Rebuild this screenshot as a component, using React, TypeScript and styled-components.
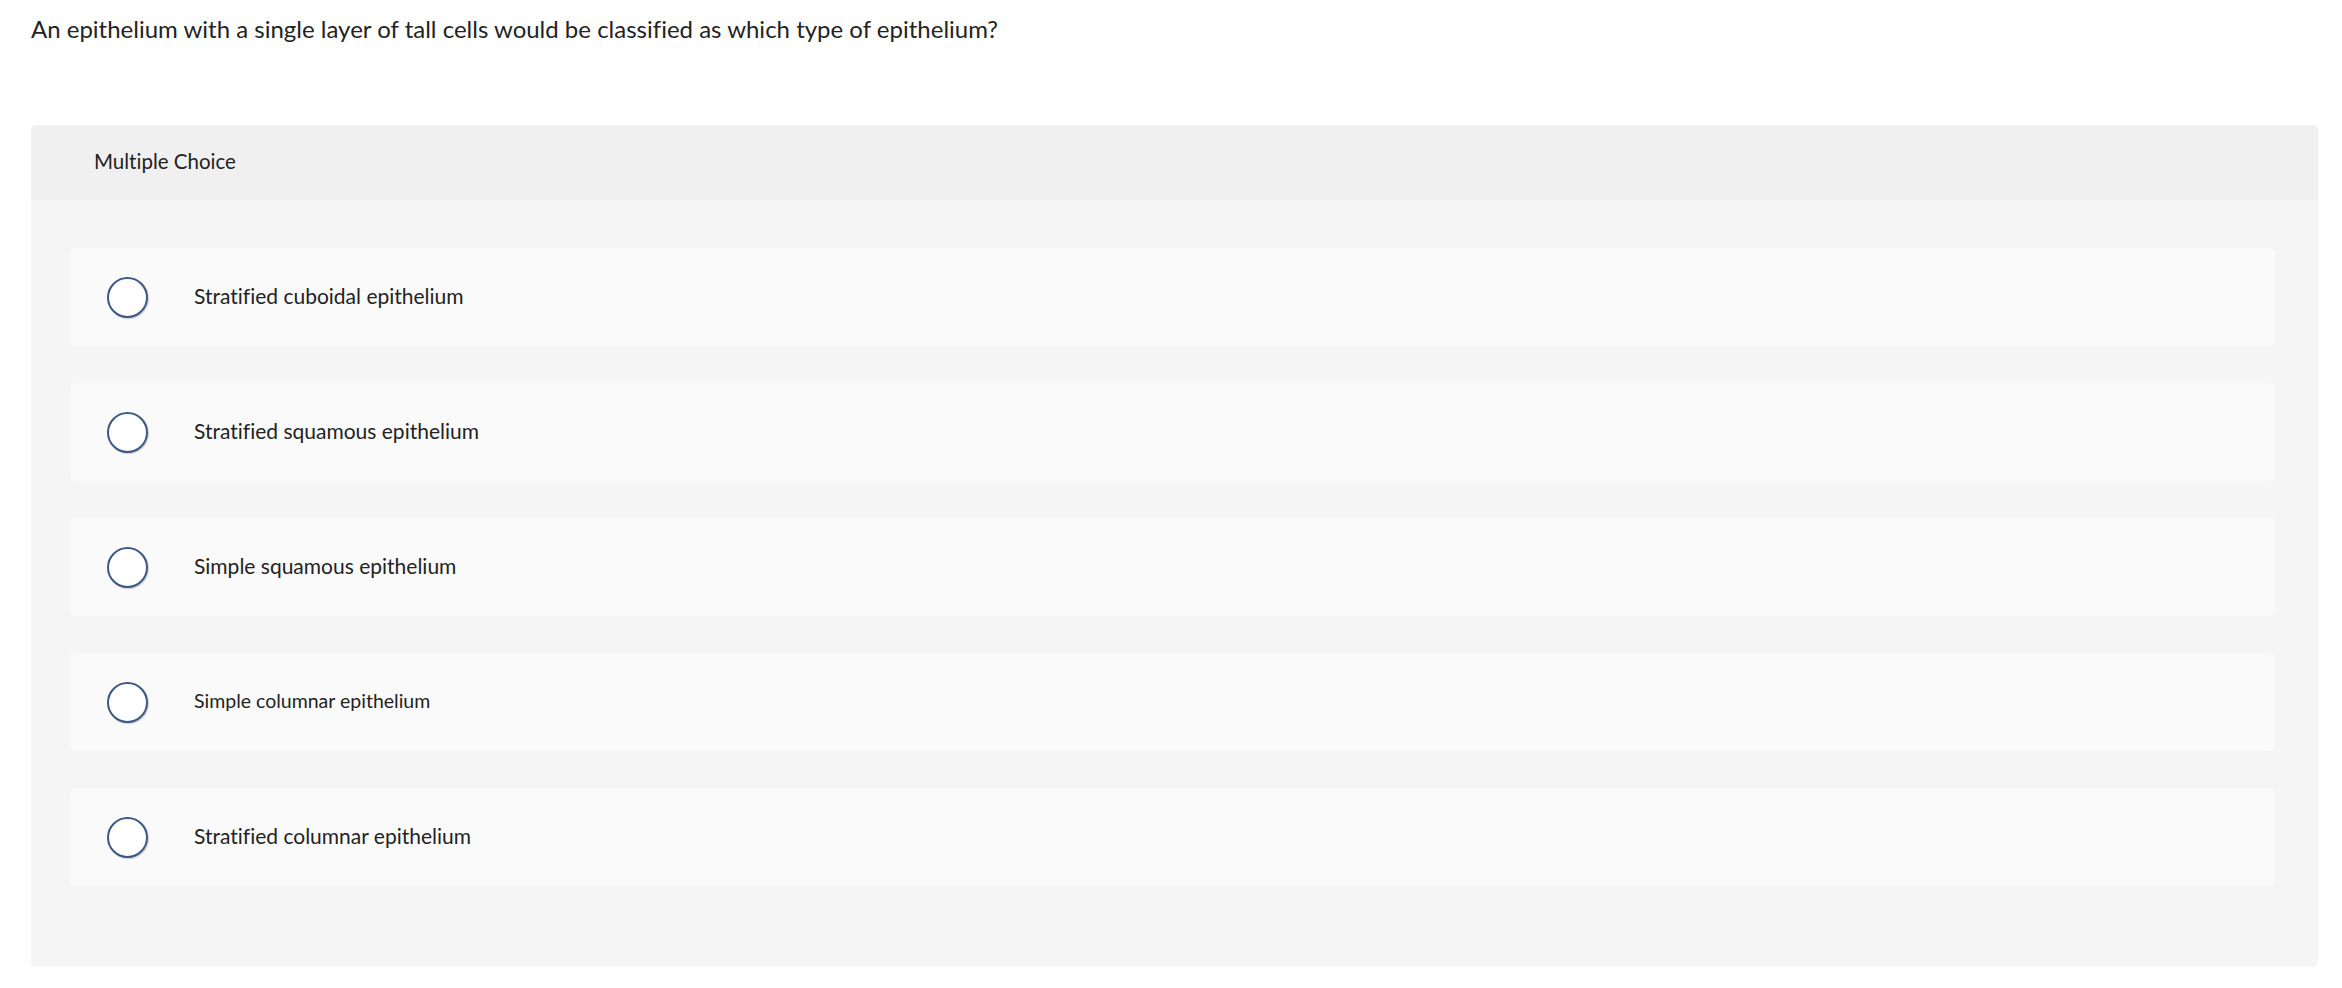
import React from 'react';
import styled, { createGlobalStyle } from 'styled-components';

const options = [
  { id: 1, label: 'Stratified cuboidal epithelium' },
  { id: 2, label: 'Stratified squamous epithelium' },
  { id: 3, label: 'Simple squamous epithelium' },
  { id: 4, label: 'Simple columnar epithelium', small: true },
  { id: 5, label: 'Stratified columnar epithelium' },
];

export default function App() {
  return (
    <>
      <GlobalStyle />
      <Page>
        <Question>
          An epithelium with a single layer of tall cells would be classified as which type of
          epithelium?
        </Question>

        <Panel>
          <PanelHeader>Multiple Choice</PanelHeader>
          <OptionList>
            {options.map(option => (
              <OptionCard key={option.id}>
                <Radio />
                <OptionLabel small={option.small}>{option.label}</OptionLabel>
              </OptionCard>
            ))}
          </OptionList>
        </Panel>
      </Page>
    </>
  );
}

// Styled Components
const GlobalStyle = createGlobalStyle`
  html, body {
    margin: 0;
    background: #ffffff;
    font-family: Lato, "Liberation Sans", sans-serif;
    font-variant-ligatures: none;
    color: #232323;
  }
`;

const Page = styled.div`
  padding: 12px 24px 0 31px;
`;

const Question = styled.div`
  font-size: 24px;
  line-height: 34px;
  margin: 0 0 79px;
`;

const Panel = styled.div`
  background: #f5f5f5;
  border-radius: 5px;
  overflow: hidden;
  height: 842px;
`;

const PanelHeader = styled.div`
  box-sizing: border-box;
  height: 75px;
  display: flex;
  align-items: center;
  padding: 0 0 3px 63px;
  background: #f0f0f0;
  font-size: 20.5px;
`;

const OptionList = styled.div`
  display: flex;
  flex-direction: column;
  gap: 37px;
  padding: 48px 43px 0 39px;
`;

const OptionCard = styled.label`
  display: flex;
  align-items: center;
  height: 98px;
  padding-left: 37px;
  background: #fafafa;
  border-radius: 5px;
  cursor: pointer;
`;

const Radio = styled.span`
  flex: none;
  box-sizing: border-box;
  width: 41px;
  height: 41px;
  border-radius: 50%;
  border: 2px solid #3b5887;
  background: #ffffff;
  box-shadow: 1px 1px 1px rgba(0, 0, 0, 0.18);
  margin-right: 46px;
`;

const OptionLabel = styled.span<{ small?: boolean }>`
  padding-bottom: 3px;
  font-size: ${({ small }) => (small ? '19.5px' : '21px')};
`;
